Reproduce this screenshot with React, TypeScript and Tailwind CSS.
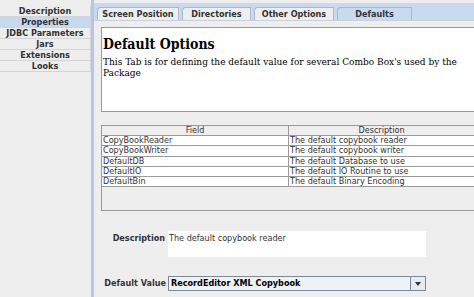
import React from "react";

const sans = { fontFamily: '"DejaVu Sans Condensed", "DejaVu Sans", sans-serif' };
const serif = { fontFamily: '"DejaVu Serif Condensed", "DejaVu Serif", serif' };

const sideItems = ["Description", "Properties", "JDBC Parameters", "Jars", "Extensions", "Looks"];
const tabs = [
  { label: "Screen Position", w: "w-[82px]" },
  { label: "Directories", w: "w-[69px]" },
  { label: "Other Options", w: "w-[80px]" },
  { label: "Defaults", w: "w-[75px]" },
];
const rows = [
  ["CopyBookReader", "The default copybook reader"],
  ["CopyBookWriter", "The default copybook writer"],
  ["DefaultDB", "The default Database to use"],
  ["DefaultIO", "The default IO Routine to use"],
  ["DefaultBin", "The default Binary Encoding"],
];

export default function App() {
  return (
    <div className="w-[474px] h-[297px] overflow-hidden bg-[#eeeeee] flex text-[#333333]" style={sans}>
      {/* side list */}
      <div className="w-[91px] shrink-0 flex flex-col pt-[6px]">
        {sideItems.map((s) => (
          <div
            key={s}
            className={`h-[11px] flex items-center justify-center text-[9px] font-bold leading-none border-b border-r border-[#d4d4d4] ${
              s === "Properties" ? "bg-[#c6d9f1]" : "bg-[#eeeeee]"
            }`}
          >
            {s}
          </div>
        ))}
      </div>
      <div className="w-[3px] shrink-0 bg-[#b6c6e6]" />

      {/* tabbed pane */}
      <div className="flex-1 min-w-0 flex flex-col">
        <div className="mt-[3px] h-[18px] bg-[#c8daf0] flex items-end pl-[3px] gap-[3px] border-b border-[#c8d2de]">
          {tabs.map((t) => (
            <div
              key={t.label}
              className={`${t.w} h-[13px] shrink-0 flex items-center justify-center text-[9px] font-bold leading-none border border-b-0 border-[#a9b7c8] rounded-tl-[4px] ${
                t.label === "Defaults" ? "bg-[#c8daf0]" : "bg-[#eeeeee]"
              }`}
            >
              {t.label}
            </div>
          ))}
        </div>

        <div className="flex-1 flex flex-col pl-[7px] pt-[6px]">
          {/* info box */}
          <div className="h-[85px] bg-white border border-r-0 border-[#9a9a9a] px-[1px] pt-[7px] text-black" style={serif}>
            <div className="text-[14px] font-bold leading-[18px]">Default Options</div>
            <div className="text-[10px] leading-[10.5px] mt-[4px] whitespace-nowrap">
              This Tab is for defining the default value for several Combo Box's used by the
              <br />
              Package
            </div>
          </div>

          {/* table */}
          <div className="mt-[13px] h-[86px] border border-r-0 border-[#9a9a9a] bg-[#eeeeee]">
            <div className="flex h-[10px] border-b border-[#9a9a9a] text-[9px] leading-none">
              <div className="w-[187px] shrink-0 flex items-center justify-center border-r border-[#9a9a9a]">Field</div>
              <div className="flex-1 flex items-center justify-center">Description</div>
            </div>
            {rows.map(([f, d]) => (
              <div key={f} className="flex h-[10.3px] bg-white border-b border-[#9a9a9a] text-[9px] leading-none">
                <div className="w-[187px] shrink-0 flex items-center px-[1px] border-r border-[#9a9a9a]">{f}</div>
                <div className="flex-1 flex items-center px-[1px] whitespace-nowrap">{d}</div>
              </div>
            ))}
          </div>

          {/* description */}
          <div className="mt-[20px] flex items-start">
            <div className="w-[67px] shrink-0 text-right pr-[3px] pt-[2px] text-[9px] font-bold leading-[10px]">Description</div>
            <div className="w-[258px] h-[26px] bg-white text-[9px] leading-[10px] px-[1px] pt-[2px]">
              The default copybook reader
            </div>
          </div>

          {/* default value */}
          <div className="mt-[19px] flex items-center">
            <div className="w-[67px] shrink-0 text-right pr-[2px] text-[9px] font-bold leading-none whitespace-nowrap">
              Default Value
            </div>
            <div className="w-[258px] h-[15px] flex border border-[#7a8a99] bg-[#eef2f7]">
              <div className="flex-1 flex items-center px-[2px] text-[9px] font-bold leading-none text-black">
                RecordEditor XML Copybook
              </div>
              <div className="w-[15px] flex items-center justify-center border-l border-[#7a8a99] bg-[#e4ebf3]">
                <div className="w-0 h-0 border-l-[3px] border-r-[3px] border-t-[4px] border-l-transparent border-r-transparent border-t-[#333333]" />
              </div>
            </div>
          </div>
        </div>
      </div>
    </div>
  );
}
